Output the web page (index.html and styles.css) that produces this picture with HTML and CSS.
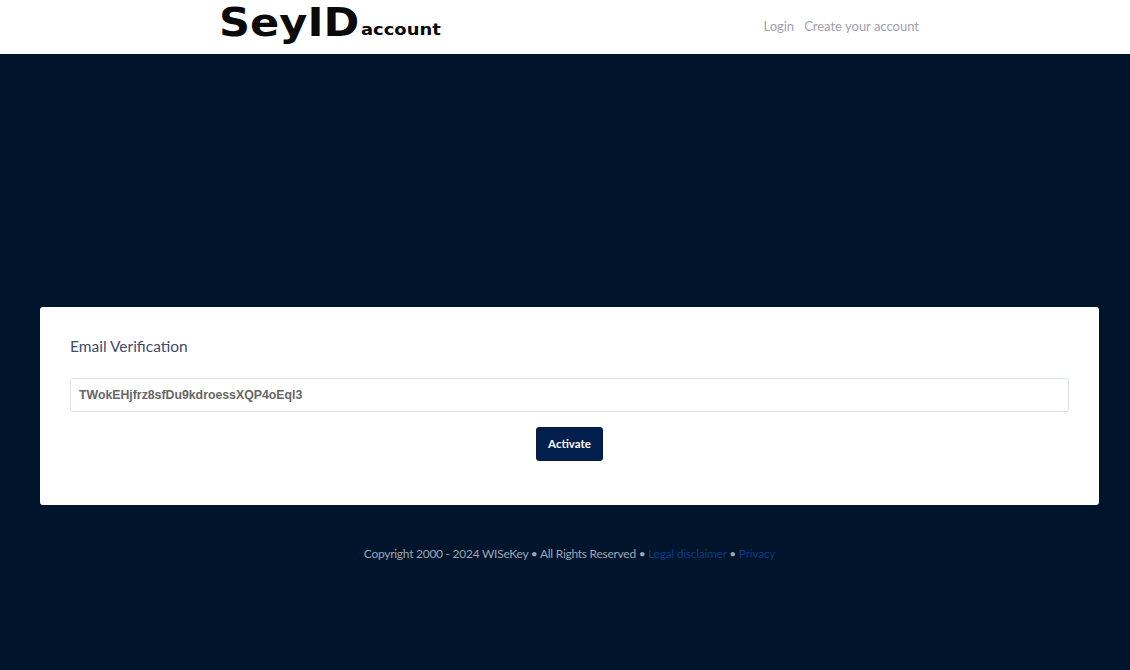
FILE: index.html
```html
<!DOCTYPE html>
<html lang="en">
<head>
<meta charset="utf-8">
<title>SeyID account</title>
<link rel="stylesheet" href="styles.css">
</head>
<body>
<header class="topbar">
  <div class="topbar-inner">
    <a class="brand" href="#"><span class="brand-main">SeyID</span><span class="brand-sub">account</span></a>
    <nav class="topnav">
      <a href="#">Login</a>
      <a href="#">Create your account</a>
    </nav>
  </div>
</header>
<main class="page">
  <section class="card">
    <h1 class="card-title">Email Verification</h1>
    <form class="form">
      <input class="field" type="text" value="TWokEHjfrz8sfDu9kdroessXQP4oEql3">
      <button class="btn" type="button">Activate</button>
    </form>
  </section>
  <footer class="footer">
    Copyright 2000 - 2024 WISeKey • All Rights Reserved • <a href="#">Legal disclaimer</a> • <a href="#">Privacy</a>
  </footer>
</main>
</body>
</html>
```
FILE: styles.css
```css
* { box-sizing: border-box; }
html, body { margin: 0; height: 100%; }
body {
  background: #00152b;
  font-family: Lato, "Noto Sans", sans-serif;
  overflow: hidden;
}
a { text-decoration: none; }
.topbar { background: #fff; height: 54px; }
.topbar-inner {
  width: 730px;
  margin-left: 205px;
  height: 100%;
  display: flex;
  align-items: flex-start;
  justify-content: space-between;
}
.brand {
  display: flex;
  align-items: baseline;
  color: #0a0a0a;
  margin-left: 14px;
  font-family: "DejaVu Sans", sans-serif;
  font-weight: 700;
}
.brand-main {
  font-size: 38.5px;
  line-height: 45px;
  display: inline-block;
  width: 142px;
  transform: scaleX(1.12);
  transform-origin: left;
}
.brand-sub {
  font-size: 16px;
  display: inline-block;
  transform: translateY(-1px) scaleX(1.12);
  transform-origin: left;
}
.topnav {
  display: flex;
  gap: 10px;
  margin: 18px 16px 0 0;
  font-size: 13px;
  line-height: 16px;
}
.topnav a { color: #a3a0b0; }
.page { padding: 253px 31px 0 40px; }
.card {
  background: #fff;
  border-radius: 3px;
  height: 198px;
  padding: 29px 30px 30px;
}
.card-title {
  margin: 0;
  font-size: 15.5px;
  font-weight: 400;
  line-height: 21px;
  color: #3f4b6b;
}
.form { margin-top: 21px; display: flex; flex-direction: column; align-items: center; }
.field {
  width: 100%;
  height: 34px;
  border: 1px solid #dde1e7;
  border-radius: 3px;
  padding: 0 8px;
  font-family: "Liberation Sans", sans-serif;
  font-size: 12.3px;
  font-weight: 700;
  color: #666;
  outline: none;
}
.btn {
  margin-top: 15px;
  width: 67px;
  height: 34px;
  border: 1px solid #0a1a3a;
  border-radius: 3px;
  background: #001f4d;
  color: #fff;
  font-family: inherit;
  font-size: 11.5px;
  font-weight: 700;
  padding: 0 0 2px;
}
.footer {
  margin-top: 40px;
  text-align: center;
  font-size: 12px;
  letter-spacing: -0.27px;
  line-height: 18px;
  color: #99a6b5;
}
.footer a { color: #0a3a80; }
```
